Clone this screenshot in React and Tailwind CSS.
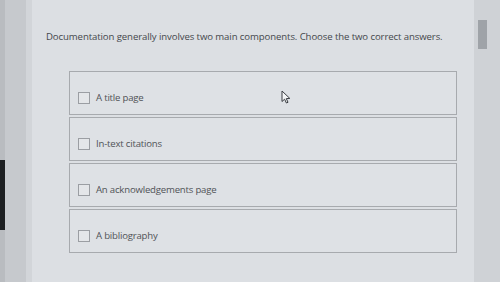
import React from "react";

const options = ["A title page", "In-text citations", "An acknowledgements page", "A bibliography"];

function Cursor() {
  return (
    <svg className="absolute left-[281px] top-[90px]" width="10" height="14" viewBox="0 0 10 14">
      <path d="M1 1 L1 11.5 L3.6 9.2 L5.4 13 L7 12.3 L5.3 8.6 L8.8 8.4 Z" fill="#f4f5f6" stroke="#3a3d42" strokeWidth="1" strokeLinejoin="round" />
    </svg>
  );
}

export default function App() {
  return (
    <div className="relative flex h-[282px] w-[500px] overflow-hidden bg-[#dcdfe3]" style={{ fontFamily: '"Open Sans", "Liberation Sans", sans-serif' }}>
      {/* left frame */}
      <div className="flex w-[32px] shrink-0">
        <div className="flex w-[5px] flex-col bg-[#b9bcc0]">
          <div className="h-[160px]" />
          <div className="h-[70px] bg-[#1d1f22]" />
        </div>
        <div className="flex-1 bg-[#c6c9cd]" />
        <div className="w-[6px] bg-[#d2d5d9]" />
      </div>

      {/* main panel */}
      <div className="flex flex-1 flex-col pt-[30px]">
        <p className="ml-[14px] whitespace-nowrap text-[9.6px] tracking-[-0.1px] text-[#45484c]">
          Documentation generally involves two main components. Choose the two correct answers.
        </p>
        <div className="ml-[37px] mt-[27px] flex w-[388px] flex-col gap-[2px]">
          {options.map((o) => (
            <div key={o} className="flex h-[44px] items-center gap-[6px] border border-[#a7aaae] bg-[#dee1e5] pl-[8px] pt-[9px]">
              <span className="h-[12px] w-[12px] border border-[#9b9ea3] bg-[#e4e6e9]" />
              <span className="text-[9.6px] tracking-[-0.2px] text-[#505357]">{o}</span>
            </div>
          ))}
        </div>
      </div>

      {/* right scrollbar */}
      <div className="flex w-[26px] shrink-0 bg-[#cfd2d6] pl-[4px] pt-[20px]">
        <div className="h-[29px] w-[9px] bg-[#9fa3a8]" />
      </div>

      <Cursor />
    </div>
  );
}
